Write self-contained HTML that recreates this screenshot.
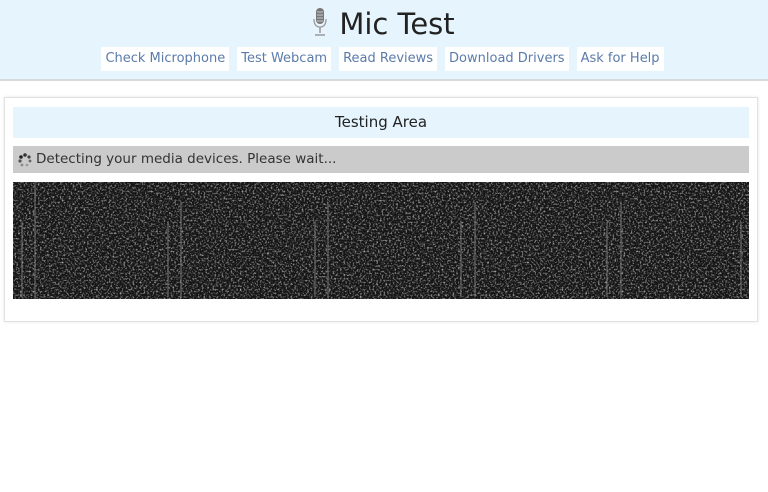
<!DOCTYPE html>
<html><head><meta charset="utf-8"><style>
*{box-sizing:border-box;margin:0;padding:0}
body{width:768px;height:492px;background:#fff;font-family:"DejaVu Sans","Liberation Sans",sans-serif;overflow:hidden}
.hdr{height:81px;background:#e6f5fd;border-bottom:2px solid #d6dadc;text-align:center}
h1{font-weight:normal;font-size:29px;color:#222;padding-top:5px;height:47px;line-height:38px}
h1 svg{vertical-align:-3px;margin-right:12px}
.nav{display:flex;justify-content:center;gap:8px;margin-left:-3px}
.nav span{background:#fff;color:#5b7baa;font-size:13px;height:24px;line-height:24px;padding:0 4px}
.card{position:absolute;left:4px;top:97px;width:754px;height:225px;border:1px solid #e2e2e2;box-shadow:0 0 3px #e6e6e6;background:#fff}
.ta{position:absolute;left:8px;top:9px;width:736px;height:31px;background:#e6f5fd;text-align:center;line-height:31px;font-size:15px;color:#222}
.st{position:absolute;left:8px;top:48px;width:736px;height:27px;background:#cbcbcb;line-height:27px;font-size:13.5px;color:#333;padding-left:23px}
.st svg{position:absolute;left:5px;top:7px}
.nz{position:absolute;left:8px;top:84px;width:736px;height:117px;background:#222;overflow:hidden}
</style></head><body>
<div class="hdr">
<h1><svg width="14" height="30" viewBox="0 0 14 30"><rect x="3" y="1" width="8" height="16" rx="4" fill="#777"/><path d="M4 5h6M4 8h6M4 11h6M4 14h6" stroke="#ccc" stroke-width="1"/><path d="M1 12q0 8 6 8q6 0 6-8" fill="none" stroke="#999" stroke-width="1.3"/><path d="M7 20v6M2 28h10" stroke="#999" stroke-width="1.5"/></svg>Mic Test</h1>
<div class="nav"><span>Check Microphone</span><span>Test Webcam</span><span>Read Reviews</span><span>Download Drivers</span><span>Ask for Help</span></div>
</div>
<div class="card">
<div class="ta">Testing Area</div>
<div class="st"><svg width="14" height="14" viewBox="0 0 14 14"><circle cx="7" cy="2" r="1.8" fill="#333"/><circle cx="11" cy="4" r="1.6" fill="#444"/><circle cx="12" cy="8" r="1.4" fill="#666"/><circle cx="3" cy="4" r="1.8" fill="#222"/><circle cx="2" cy="8" r="1.6" fill="#555"/><circle cx="4" cy="12" r="1.4" fill="#888"/><circle cx="9" cy="12" r="1.3" fill="#999"/></svg>Detecting your media devices. Please wait...</div>
<div class="nz"><svg width="736" height="117"><filter id="n"><feTurbulence type="fractalNoise" baseFrequency="0.55" numOctaves="2" seed="3"/><feColorMatrix values="0 0 0 0 0.5  0 0 0 0 0.5  0 0 0 0 0.5  0 0 0 2.5 -1.2"/></filter><rect width="736" height="117" fill="#151515"/><rect width="736" height="117" filter="url(#n)"/>
<g stroke="#777" stroke-width="1"><path d="M9 40v75M22 0v117M155 40v75M168 20v95M302 40v75M315 20v95M448 40v75M462 20v95M594 40v75M608 20v95M728 40v75"/></g></svg></div>
</div>
</body></html>
